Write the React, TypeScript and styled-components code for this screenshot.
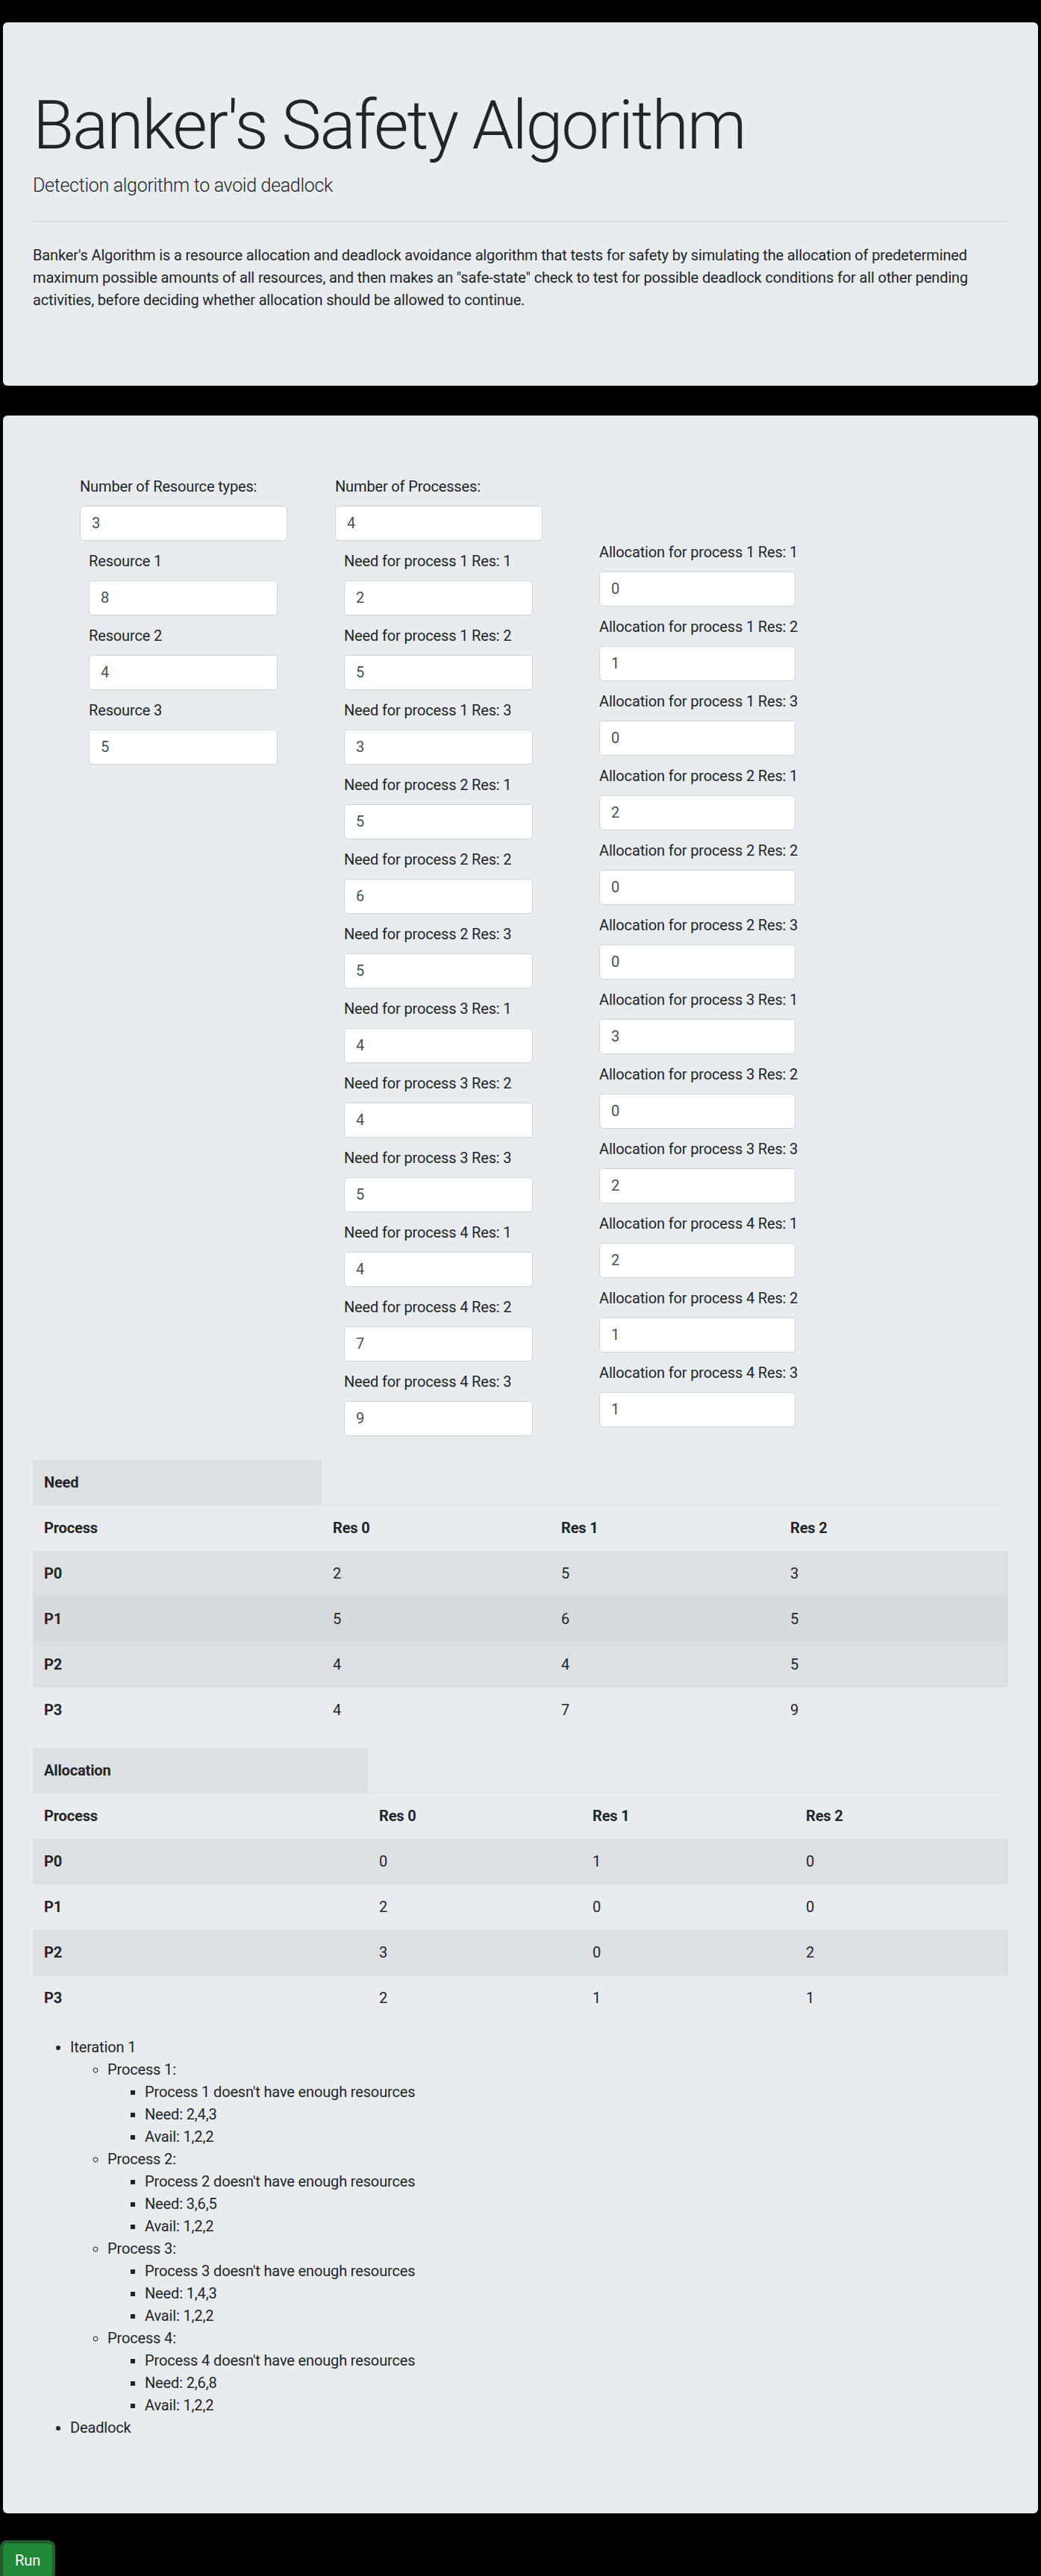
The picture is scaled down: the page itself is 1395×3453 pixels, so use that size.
import React from 'react'
import styled, { createGlobalStyle } from 'styled-components'

const GlobalStyle = createGlobalStyle`
	* {
		box-sizing: border-box;
	}
	body {
		margin: 0;
		background-color: #000;
		color: #212529;
		font-family: Roboto, "Segoe UI", "Helvetica Neue", Arial, sans-serif;
		font-size: 20px;
		line-height: 30px;
		letter-spacing: -0.15px;
	}
`

const Page = styled.div`
	padding: 30px 4px 0;
`

const Jumbotron = styled.section`
	background-color: #e9ecef;
	border-radius: 6px;
	padding: 80px 40px;
	margin-bottom: 40px;
`

const Title = styled.h1`
	margin: 5px 0 5px;
	font-size: 90px;
	font-weight: 300;
	line-height: 1.2;
	letter-spacing: -2.2px;
`

const Lead = styled.p`
	margin: 0;
	padding-top: 2px;
	height: 37.5px;
	font-size: 25px;
	font-weight: 300;
	line-height: 1.5;
	letter-spacing: -0.3px;
`

const Divider = styled.hr`
	margin: 30px 0;
	border: 0;
	border-top: 1px solid rgba(0, 0, 0, 0.1);
`

const Text = styled.p`
	margin: 0 0 20px;
`

const FormRow = styled.div`
	display: flex;
	align-items: flex-start;
	padding-left: 63px;
	margin-bottom: 32px;
`

const Column = styled.div<{ $width: number; $gap?: number; $offset?: number }>`
	width: ${p => p.$width}px;
	margin-right: ${p => p.$gap ?? 0}px;
	padding-top: ${p => p.$offset ?? 0}px;
	flex-shrink: 0;
`

const Nested = styled.div`
	padding: 0 13px 0 12px;
`

const Field = styled.div`
	margin-top: 12px;
`

const Label = styled.label`
	display: block;
	margin-bottom: 11px;
	line-height: 30px;
	white-space: nowrap;
`

const Input = styled.input`
	display: block;
	width: 100%;
	height: 47px;
	padding: 7px 15px;
	font-family: inherit;
	font-size: 20px;
	line-height: 30px;
	color: #495057;
	background-color: #fff;
	border: 1px solid #ced4da;
	border-radius: 5px;
	outline: none;
`

const Table = styled.table`
	width: 100%;
	border-collapse: collapse;
	margin-bottom: 20px;
	table-layout: fixed;
`

const Row = styled.tr<{ $tone?: 'striped' | 'hover' }>`
	background-color: ${p => (p.$tone === 'striped' ? '#dde0e3' : p.$tone === 'hover' ? '#d8dbde' : 'transparent')};
`

const Cell = styled.td<{ $bold?: boolean }>`
	height: 61px;
	padding: 15px;
	text-align: left;
	vertical-align: top;
	font-weight: ${p => (p.$bold ? 700 : 400)};
	line-height: 30px;
`

const CaptionCell = styled.th`
	height: 61px;
	padding: 15px;
	text-align: left;
	vertical-align: top;
	font-weight: 700;
	line-height: 30px;
	background-color: #dde0e3;
	border-bottom: 1px solid #dee2e6;
`

const BlankCell = styled.td`
	border-bottom: 1px solid #dee2e6;
`

const Steps = styled.ul`
	margin: 0 0 20px;
	padding-left: 50px;
	ul {
		margin: 0;
		padding-left: 50px;
	}
`

const RunButton = styled.button`
	display: inline-block;
	padding: 7px 15px;
	font-family: inherit;
	font-size: 20px;
	line-height: 30px;
	color: #fff;
	background-color: #218838;
	border: 1px solid #1e7e34;
	border-radius: 5px;
	box-shadow: 0 0 0 4px rgba(72, 180, 97, 0.5);
	cursor: pointer;
`

const resources = [8, 4, 5]
const need = [[2, 5, 3], [5, 6, 5], [4, 4, 5], [4, 7, 9]]
const allocation = [[0, 1, 0], [2, 0, 0], [3, 0, 2], [2, 1, 1]]
const iterationNeeds = ['2,4,3', '3,6,5', '1,4,3', '2,6,8']

const MatrixTable = ({ caption, widths, rows, hoverRow }: { caption: string; widths: number[]; rows: number[][]; hoverRow?: number }) => (
	<Table>
		<colgroup>
			{widths.map((w, i) => <col key={i} style={{ width: w }} />)}
		</colgroup>
		<thead>
			<tr>
				<CaptionCell>{caption}</CaptionCell>
				<BlankCell />
				<BlankCell />
				<BlankCell />
			</tr>
		</thead>
		<tbody>
			<Row>
				<Cell $bold>Process</Cell>
				{rows[0].map((_, j) => <Cell key={j} $bold>Res {j}</Cell>)}
			</Row>
			{rows.map((r, i) => (
				<Row key={i} $tone={i === hoverRow ? 'hover' : i % 2 === 0 ? 'striped' : undefined}>
					<Cell $bold>P{i}</Cell>
					{r.map((v, j) => <Cell key={j}>{v}</Cell>)}
				</Row>
			))}
		</tbody>
	</Table>
)

const App = () => {
	const needFields = need.flatMap((r, i) => r.map((v, j) => ({ label: `Need for process ${i + 1} Res: ${j + 1}`, value: v })))
	const allocFields = allocation.flatMap((r, i) => r.map((v, j) => ({ label: `Allocation for process ${i + 1} Res: ${j + 1}`, value: v })))

	return <>
		<GlobalStyle />
		<Page>
			<Jumbotron>
				<Title>Banker's Safety Algorithm</Title>
				<Lead>Detection algorithm to avoid deadlock</Lead>
				<Divider />
				<Text>
					Banker's Algorithm is a resource allocation and deadlock avoidance algorithm that tests for safety by simulating the allocation of predetermined maximum possible amounts of all resources, and then makes an "safe-state" check to test for possible deadlock conditions for all other pending activities, before deciding whether allocation should be allowed to continue.
				</Text>
			</Jumbotron>

			<Jumbotron>
				<FormRow>
					<Column $width={278} $gap={64}>
						<Label>Number of Resource types:</Label>
						<Input defaultValue={3} />
						<Nested>
							{resources.map((v, i) => (
								<Field key={i}>
									<Label>Resource {i + 1}</Label>
									<Input defaultValue={v} />
								</Field>
							))}
						</Nested>
					</Column>
					<Column $width={278} $gap={76}>
						<Label>Number of Processes:</Label>
						<Input defaultValue={4} />
						<Nested>
							{needFields.map(f => (
								<Field key={f.label}>
									<Label>{f.label}</Label>
									<Input defaultValue={f.value} />
								</Field>
							))}
						</Nested>
					</Column>
					<Column $width={263} $offset={76}>
						{allocFields.map(f => (
							<Field key={f.label}>
								<Label>{f.label}</Label>
								<Input defaultValue={f.value} />
							</Field>
						))}
					</Column>
				</FormRow>

				<MatrixTable caption="Need" widths={[387, 306, 307, 307]} rows={need} hoverRow={1} />
				<MatrixTable caption="Allocation" widths={[449, 286, 286, 286]} rows={allocation} />

				<Steps>
					<li>
						Iteration 1
						<ul>
							{iterationNeeds.map((n, i) => (
								<li key={i}>
									Process {i + 1}:
									<ul>
										<li>Process {i + 1} doesn't have enough resources</li>
										<li>Need: {n}</li>
										<li>Avail: 1,2,2</li>
									</ul>
								</li>
							))}
						</ul>
					</li>
					<li>Deadlock</li>
				</Steps>
			</Jumbotron>

			<RunButton>Run</RunButton>
		</Page>
	</>
}

export default App
